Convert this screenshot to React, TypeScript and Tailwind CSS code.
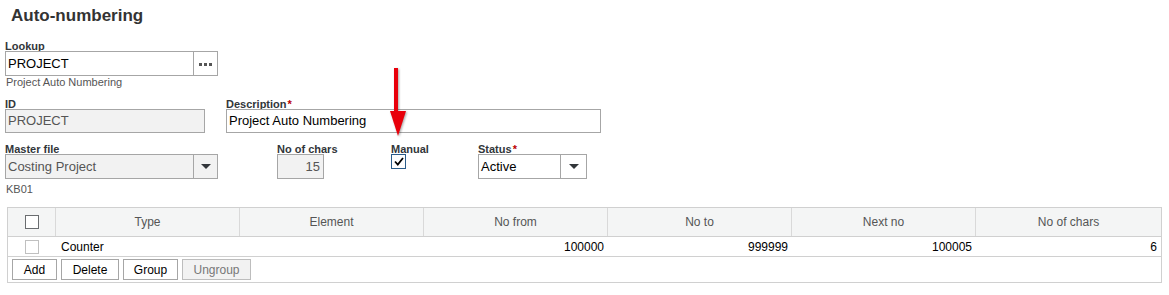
import React from 'react';

function Label({ text, required }: { text: string; required?: boolean }) {
  return (
    <div className="h-[13px] leading-[16px] text-[11px] font-bold text-[#32363a] whitespace-nowrap">
      {text}
      {required && <span className="text-[#bb0000] ml-[1px]">*</span>}
    </div>
  );
}

function Caret() {
  return (
    <svg width="10" height="6" viewBox="0 0 10 6">
      <path d="M0 0 L10 0 L5 5 Z" fill="#32363a" />
    </svg>
  );
}

const columns = ['Type', 'Element', 'No from', 'No to', 'Next no', 'No of chars'];

export default function App() {
  return (
    <div
      className="relative w-[1169px] h-[295px] bg-white overflow-hidden text-[#32363a]"
      style={{ fontFamily: '"Liberation Sans", Arial, sans-serif' }}
    >
      {/* Header */}
      <h1 className="h-[38px] pl-[11px] pt-[6px] text-[17px] leading-[20px] font-bold text-[#333]">
        Auto-numbering
      </h1>

      <div className="pl-[5px]">
        {/* Lookup */}
        <div className="flex flex-col">
          <Label text="Lookup" />
          <div className="flex w-[213px] h-[25px] border border-[#a6a6a6] bg-white">
            <div className="flex-1 flex items-center px-[2px] text-[13px] text-black">PROJECT</div>
            <div className="w-[24px] border-l border-[#a6a6a6] flex items-center justify-center gap-[2px] pt-[2px]">
              <span className="w-[3px] h-[3px] bg-[#555]" />
              <span className="w-[3px] h-[3px] bg-[#555]" />
              <span className="w-[3px] h-[3px] bg-[#555]" />
            </div>
          </div>
          <div className="h-[12px] leading-[12px] text-[11px] text-[#555] pl-[1px]">Project Auto Numbering</div>
        </div>

        {/* ID / Description */}
        <div className="flex mt-[8px]">
          <div className="w-[221px] flex flex-col">
            <Label text="ID" />
            <div className="w-[200px] h-[24px] border border-[#a6a6a6] bg-[#f2f2f2] flex items-center px-[2px] text-[13px] text-[#555]">
              PROJECT
            </div>
          </div>
          <div className="flex flex-col">
            <Label text="Description" required />
            <div className="w-[375px] h-[24px] border border-[#a6a6a6] bg-white flex items-center px-[2px] text-[13px] text-black">
              Project Auto Numbering
            </div>
          </div>
        </div>

        {/* Master file / No of chars / Manual / Status */}
        <div className="flex mt-[8px]">
          <div className="w-[272px] flex flex-col">
            <Label text="Master file" />
            <div className="flex w-[213px] h-[25px] border border-[#a6a6a6] bg-[#f2f2f2]">
              <div className="flex-1 flex items-center px-[2px] text-[13px] text-[#555]">Costing Project</div>
              <div className="w-[24px] border-l border-[#a6a6a6] flex items-center justify-center">
                <Caret />
              </div>
            </div>
            <div className="mt-[4px] h-[12px] leading-[12px] text-[11px] text-[#555] pl-[1px]">KB01</div>
          </div>
          <div className="w-[114px] flex flex-col">
            <Label text="No of chars" />
            <div className="w-[47px] h-[25px] border border-[#a6a6a6] bg-[#f2f2f2] flex items-center justify-end px-[3px] text-[13px] text-[#555]">
              15
            </div>
          </div>
          <div className="w-[87px] flex flex-col">
            <Label text="Manual" />
            <div className="w-[15px] h-[15px] border border-[#2b5c8a] bg-white flex items-center justify-center">
              <svg width="10" height="9" viewBox="0 0 10 9">
                <path d="M1 4.5 L3.8 7.5 L9 1" fill="none" stroke="#000" strokeWidth="1.8" />
              </svg>
            </div>
          </div>
          <div className="flex flex-col">
            <Label text="Status" required />
            <div className="flex w-[109px] h-[25px] border border-[#a6a6a6] bg-white">
              <div className="flex-1 flex items-center px-[2px] text-[13px] text-black">Active</div>
              <div className="w-[26px] border-l border-[#a6a6a6] flex items-center justify-center">
                <Caret />
              </div>
            </div>
          </div>
        </div>
      </div>

      {/* Table */}
      <div className="ml-[7px] mt-[12px] w-[1155px] border border-[#d0d0d0]">
        <div className="grid grid-cols-[48px_184px_184px_184px_184px_184px_1fr] h-[29px] bg-[#f4f5f5] border-b border-[#d0d0d0]">
          <div className="flex items-center justify-center border-r border-[#d9d9d9]">
            <div className="w-[14px] h-[14px] border border-[#6a6d70] bg-white" />
          </div>
          {columns.map((c, i) => (
            <div
              key={c}
              className={`flex items-center justify-center text-[12px] text-[#555] ${i < columns.length - 1 ? 'border-r border-[#d9d9d9]' : ''}`}
            >
              {c}
            </div>
          ))}
        </div>
        <div className="grid grid-cols-[48px_184px_184px_184px_184px_184px_1fr] h-[20px] border-b border-[#d0d0d0] text-[12px] text-black">
          <div className="flex items-center justify-center">
            <div className="w-[14px] h-[14px] border border-[#c0c0c0] bg-white" />
          </div>
          <div className="flex items-center pl-[5px]">Counter</div>
          <div />
          <div className="flex items-center justify-end pr-[4px]">100000</div>
          <div className="flex items-center justify-end pr-[4px]">999999</div>
          <div className="flex items-center justify-end pr-[4px]">100005</div>
          <div className="flex items-center justify-end pr-[4px]">6</div>
        </div>
        <div className="flex items-center gap-[4px] h-[25px] pl-[4px] text-[12px]">
          <button className="h-[21px] w-[45px] border border-[#a6a6a6] bg-white text-black">Add</button>
          <button className="h-[21px] w-[58px] border border-[#a6a6a6] bg-white text-black">Delete</button>
          <button className="h-[21px] w-[55px] border border-[#a6a6a6] bg-white text-black">Group</button>
          <button className="h-[21px] w-[69px] border border-[#bdbdbd] bg-[#f2f2f2] text-[#777]">Ungroup</button>
        </div>
      </div>

      {/* Annotation arrow */}
      <svg
        className="absolute left-[388px] top-[66px]"
        width="22"
        height="76"
        viewBox="0 0 22 76"
        style={{ filter: 'drop-shadow(1px 1px 1px rgba(0,0,0,0.35))' }}
      >
        <rect x="6" y="2" width="4" height="46" fill="#e8000b" />
        <path d="M2 45 L18 45 L10 70 Z" fill="#e8000b" />
      </svg>
    </div>
  );
}
